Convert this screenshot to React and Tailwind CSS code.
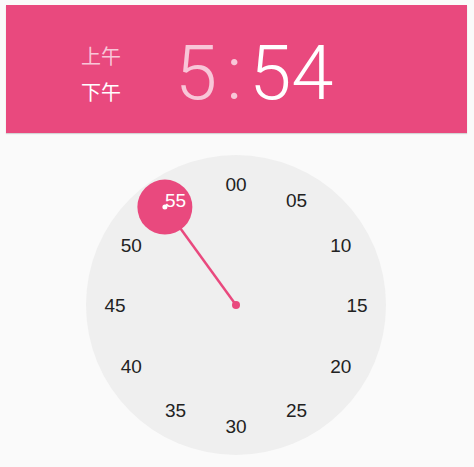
import React from 'react'

const PINK = '#e9497e'
const CX = 150
const CY = 150
const R_LABEL = 121

// minute labels around the dial, every five minutes
const marks = Array.from({ length: 12 }, (_, i) => i * 5)

function polar(minute, r) {
  const a = (minute / 60) * Math.PI * 2
  return { x: CX + r * Math.sin(a), y: CY - r * Math.cos(a) }
}

function Header() {
  return (
    <div className="ml-[6px] mt-[5px] w-[461px] h-[128px] bg-[#e9497e] shadow-[0_1px_1px_rgba(0,0,0,0.15)] flex items-center">
      <div className="ml-[75px] mt-[9px] flex flex-col gap-[12px] text-[20px] leading-[24px] font-['Noto_Sans_CJK_SC',sans-serif]">
        <span className="text-[#f8c6d8]">上午</span>
        <span className="text-white">下午</span>
      </div>
      <div className="ml-[54px] mt-[8px] flex items-baseline text-[76px] leading-none font-light font-['Roboto',sans-serif]">
        <span className="text-[#f8c6d8]">5</span>
        <span className="text-[#f8c6d8] pl-[9px] pr-[7px]">:</span>
        <span className="text-white">54</span>
      </div>
    </div>
  )
}

function Dial({ minute = 54 }) {
  const sel = polar(minute, R_LABEL)
  return (
    <div className="relative w-[300px] h-[300px] rounded-full bg-[#efefef]">
      <svg className="absolute inset-0" width="300" height="300" viewBox="0 0 300 300">
        <line x1={CX} y1={CY} x2={sel.x} y2={sel.y} stroke={PINK} strokeWidth="2.5" />
        <circle cx={CX} cy={CY} r="4" fill={PINK} />
        <circle cx={sel.x} cy={sel.y} r="27.5" fill={PINK} />
        <circle cx={sel.x} cy={sel.y} r="2.5" fill="#fff" />
      </svg>
      {marks.map((m) => {
        const p = polar(m, R_LABEL)
        const inside = Math.hypot(p.x - sel.x, p.y - sel.y) < 26
        return (
          <span
            key={m}
            className={`absolute -translate-x-1/2 -translate-y-1/2 text-[19px] leading-none font-['Liberation_Sans',sans-serif] ${inside ? 'text-white' : 'text-[#222]'}`}
            style={{ left: p.x, top: p.y }}
          >
            {String(m).padStart(2, '0')}
          </span>
        )
      })}
    </div>
  )
}

export default function App() {
  return (
    <div className="w-[474px] h-[467px] bg-[#fafafa] overflow-hidden">
      <Header />
      <div className="flex justify-center pt-[22px] pr-[2px]">
        <Dial />
      </div>
    </div>
  )
}
